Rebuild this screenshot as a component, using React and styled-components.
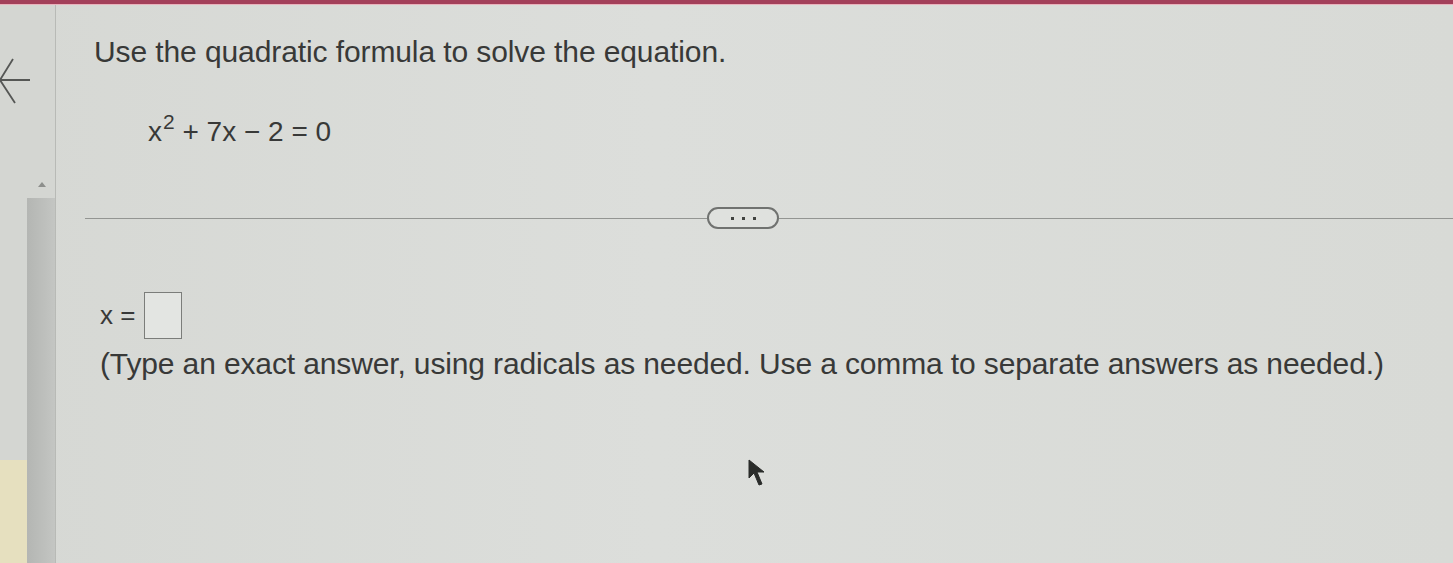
import React from 'react';
import styled, { createGlobalStyle } from 'styled-components';

const GlobalStyle = createGlobalStyle`
  html, body {
    margin: 0;
    padding: 0;
    height: 100%;
    overflow: hidden;
  }
  body {
    font-family: "Liberation Sans", Arial, sans-serif;
    background: #d9dbd7;
  }
`;

const Page = styled.div`
  width: 1453px;
  height: 563px;
  display: flex;
  flex-direction: column;
  background: linear-gradient(90deg, #d6d8d4 0%, #dcdedb 45%, #d8dad6 100%);
`;

const TopBar = styled.div`
  height: 4px;
  background: #a3405a;
  border-bottom: 1px solid #e9b3bd;
  flex: none;
`;

const Body = styled.div`
  flex: 1;
  display: flex;
  min-height: 0;
`;

const Sidebar = styled.div`
  width: 55px;
  flex: none;
  display: grid;
  grid-template-columns: 29px 26px;
  border-right: 1px solid #b8bab6;
  background: #d4d6d2;
`;

const SideLeft = styled.div`
  display: flex;
  flex-direction: column;
  justify-content: space-between;
  padding-top: 52px;
`;

const BackArrow = styled.svg`
  width: 32px;
  height: 48px;
  margin-left: -2px;
`;

const YellowBlock = styled.div`
  height: 103px;
  width: 35px;
  background: #e6e0bf;
`;

const SideRight = styled.div`
  display: flex;
  flex-direction: column;
  align-items: center;
  padding-top: 177px;
  position: relative;
  z-index: 1;
`;

const UpTriangle = styled.div`
  width: 0;
  height: 0;
  border-left: 4px solid transparent;
  border-right: 4px solid transparent;
  border-bottom: 5px solid #8d8f8c;
  margin-bottom: 11px;
`;

const ScrollThumb = styled.div`
  flex: 1;
  width: 28px;
  margin-left: -2px;
  background: linear-gradient(90deg, #b4b6b3 0%, #bdbfbc 60%, #c4c6c3 100%);
`;

const Content = styled.div`
  flex: 1;
  display: flex;
  flex-direction: column;
  color: #383938;
  position: relative;
`;

const Question = styled.div`
  padding: 29px 0 0 38px;
  font-size: 30px;
  line-height: 36px;
  letter-spacing: -0.1px;
`;

const Equation = styled.div`
  padding: 45px 0 0 92px;
  font-size: 28px;
  line-height: 34px;
  letter-spacing: 0;
  sup {
    font-size: 21px;
    vertical-align: 12px;
    line-height: 0;
    margin-left: 1px;
  }
`;

const DividerRow = styled.div`
  margin-top: 58px;
  margin-left: 29px;
  display: flex;
  align-items: center;
`;

const Line = styled.div`
  flex: ${({ grow }) => grow};
  height: 1px;
  background: #939592;
`;

const MorePill = styled.div`
  width: 68px;
  height: 18px;
  border: 2px solid #707270;
  border-radius: 11px;
  display: flex;
  align-items: center;
  justify-content: center;
  gap: 8px;
  background: #dfe1de;
`;

const Dot = styled.span`
  width: 3px;
  height: 3px;
  background: #404240;
`;

const Answer = styled.div`
  padding: 61px 0 0 44px;
  display: flex;
  flex-direction: column;
`;

const AnswerRow = styled.div`
  display: flex;
  align-items: center;
  gap: 9px;
  font-size: 26px;
  letter-spacing: 0;
  padding-top: 2px;
`;

const InputBox = styled.div`
  width: 36px;
  height: 45px;
  border: 1px solid #7b7d7a;
  background: #e3e5e2;
`;

const Hint = styled.div`
  margin-top: 7px;
  font-size: 30px;
  line-height: 36px;
  letter-spacing: -0.13px;
`;

const Cursor = styled.svg`
  position: absolute;
  left: 691px;
  top: 453px;
  width: 20px;
  height: 30px;
`;

export default function App() {
  return (
    <>
      <GlobalStyle />
      <Page>
        <TopBar />
        <Body>
          <Sidebar>
            <SideLeft>
              <BackArrow viewBox="0 0 32 48">
                <path
                  d="M32 23 H2 M15 2 L2 23 L17 46"
                  fill="none"
                  stroke="#555755"
                  strokeWidth="1.8"
                />
              </BackArrow>
              <YellowBlock />
            </SideLeft>
            <SideRight>
              <UpTriangle />
              <ScrollThumb />
            </SideRight>
          </Sidebar>
          <Content>
            <Question>Use the quadratic formula to solve the equation.</Question>
            <Equation>
              x<sup>2</sup> + 7x − 2 = 0
            </Equation>
            <DividerRow>
              <Line grow={622} />
              <MorePill>
                <Dot />
                <Dot />
                <Dot />
              </MorePill>
              <Line grow={674} />
            </DividerRow>
            <Answer>
              <AnswerRow>
                <span>x =</span>
                <InputBox />
              </AnswerRow>
              <Hint>
                (Type an exact answer, using radicals as needed. Use a comma to separate answers as needed.)
              </Hint>
            </Answer>
            <Cursor viewBox="0 0 20 30">
              <path
                d="M2 2 L2 20 L7 15 L12 27 L15 26 L10 14 L17 14 Z"
                fill="#2a2c2a"
                stroke="#2a2c2a"
                strokeWidth="1"
                strokeLinejoin="round"
              />
            </Cursor>
          </Content>
        </Body>
      </Page>
    </>
  );
}
